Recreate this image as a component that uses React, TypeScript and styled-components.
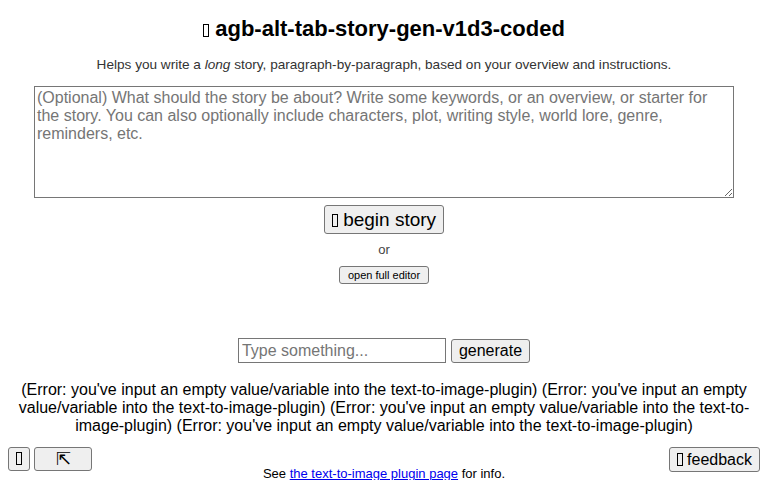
import React from "react";
import styled, { createGlobalStyle } from "styled-components";

const Global = createGlobalStyle`
  html, body { margin: 0; padding: 0; background: #fff; }
  body { font-family: "Liberation Sans", Arial, sans-serif; color: #000; overflow: hidden; height: 480px; }
`;

const Page = styled.div`
  display: flex;
  flex-direction: column;
  align-items: center;
  padding-top: 16px;
`;

const Tofu = styled.span`
  display: inline-block;
  box-sizing: border-box;
  width: 6px;
  height: 13px;
  border: 1px solid currentColor;
  vertical-align: -1px;
`;

const Title = styled.h1`
  margin: 0;
  font-size: 22px;
  font-weight: bold;
  line-height: 26px;
`;

const Sub = styled.p`
  margin: 15px 0 0;
  font-size: 13.6px;
  line-height: 15px;
  color: #333;
`;

const Area = styled.textarea`
  margin-top: 14px;
  width: 700px;
  height: 112px;
  box-sizing: border-box;
  padding: 2px;
  border: 1px solid #767676;
  font-family: "Liberation Sans", Arial, sans-serif;
  font-size: 16px;
  line-height: 18px;
  resize: vertical;
  &::placeholder { color: #757575; }
`;

const Btn = styled.button<{ $size: number; $h: number; $w?: number; $pad?: number }>`
  font-family: "Liberation Sans", Arial, sans-serif;
  font-size: ${(p) => p.$size}px;
  height: ${(p) => p.$h}px;
  ${(p) => (p.$w ? `width: ${p.$w}px;` : "")}
  padding: 0 ${(p) => p.$pad ?? 6}px;
  background: #efefef;
  color: #000;
  border: 1px solid #767676;
  border-radius: 3px;
  line-height: 1;
`;

const BeginBtn = styled(Btn)`
  margin-top: 7px;
`;

const Or = styled.div`
  margin-top: 8px;
  font-size: 13px;
  line-height: 15px;
  color: #444;
`;

const EditorBtn = styled(Btn)`
  margin-top: 9px;
`;

const GenRow = styled.div`
  margin-top: 54px;
  display: flex;
  gap: 5px;
  align-items: center;
`;

const Input = styled.input`
  width: 208px;
  height: 25px;
  box-sizing: border-box;
  border: 1px solid #767676;
  padding: 1px 3px;
  font-family: "Liberation Sans", Arial, sans-serif;
  font-size: 16px;
  &::placeholder { color: #757575; }
`;

const Errors = styled.div`
  margin-top: 18px;
  width: 740px;
  text-align: center;
  font-size: 16px;
  line-height: 18px;
`;

const Info = styled.div`
  margin-top: 31px;
  font-size: 13px;
  line-height: 15px;
  a { color: #0000ee; }
`;

const Corner = styled.div<{ $side: "left" | "right" }>`
  position: absolute;
  top: 447px;
  ${(p) => p.$side}: 8px;
  display: flex;
  gap: 4px;
`;

export default function App() {
  return (
    <>
      <Global />
      <Page>
        <Title><Tofu /> agb-alt-tab-story-gen-v1d3-coded</Title>
        <Sub>
          Helps you write a <i>long</i> story, paragraph-by-paragraph, based on your overview and instructions.
        </Sub>
        <Area placeholder="(Optional) What should the story be about? Write some keywords, or an overview, or starter for the story. You can also optionally include characters, plot, writing style, world lore, genre, reminders, etc." />
        <BeginBtn $size={19} $h={29} $pad={7}><Tofu /> begin story</BeginBtn>
        <Or>or</Or>
        <EditorBtn $size={11} $h={18} $pad={8}>open full editor</EditorBtn>
        <GenRow>
          <Input placeholder="Type something..." />
          <Btn $size={16} $h={24} $pad={7}>generate</Btn>
        </GenRow>
        <Errors>
          (Error: you've input an empty value/variable into the text-to-image-plugin) (Error: you've input an empty value/variable into the text-to-image-plugin) (Error: you've input an empty value/variable into the text-to-image-plugin) (Error: you've input an empty value/variable into the text-to-image-plugin)
        </Errors>
        <Info>
          See <a href="#">the text-to-image plugin page</a> for info.
        </Info>
      </Page>
      <Corner $side="left">
        <Btn $size={16} $h={24} $w={22}><Tofu /></Btn>
        <Btn $size={18} $h={24} $w={58}>⇱</Btn>
      </Corner>
      <Corner $side="right">
        <Btn $size={16} $h={25} $pad={7}><Tofu /> feedback</Btn>
      </Corner>
    </>
  );
}
